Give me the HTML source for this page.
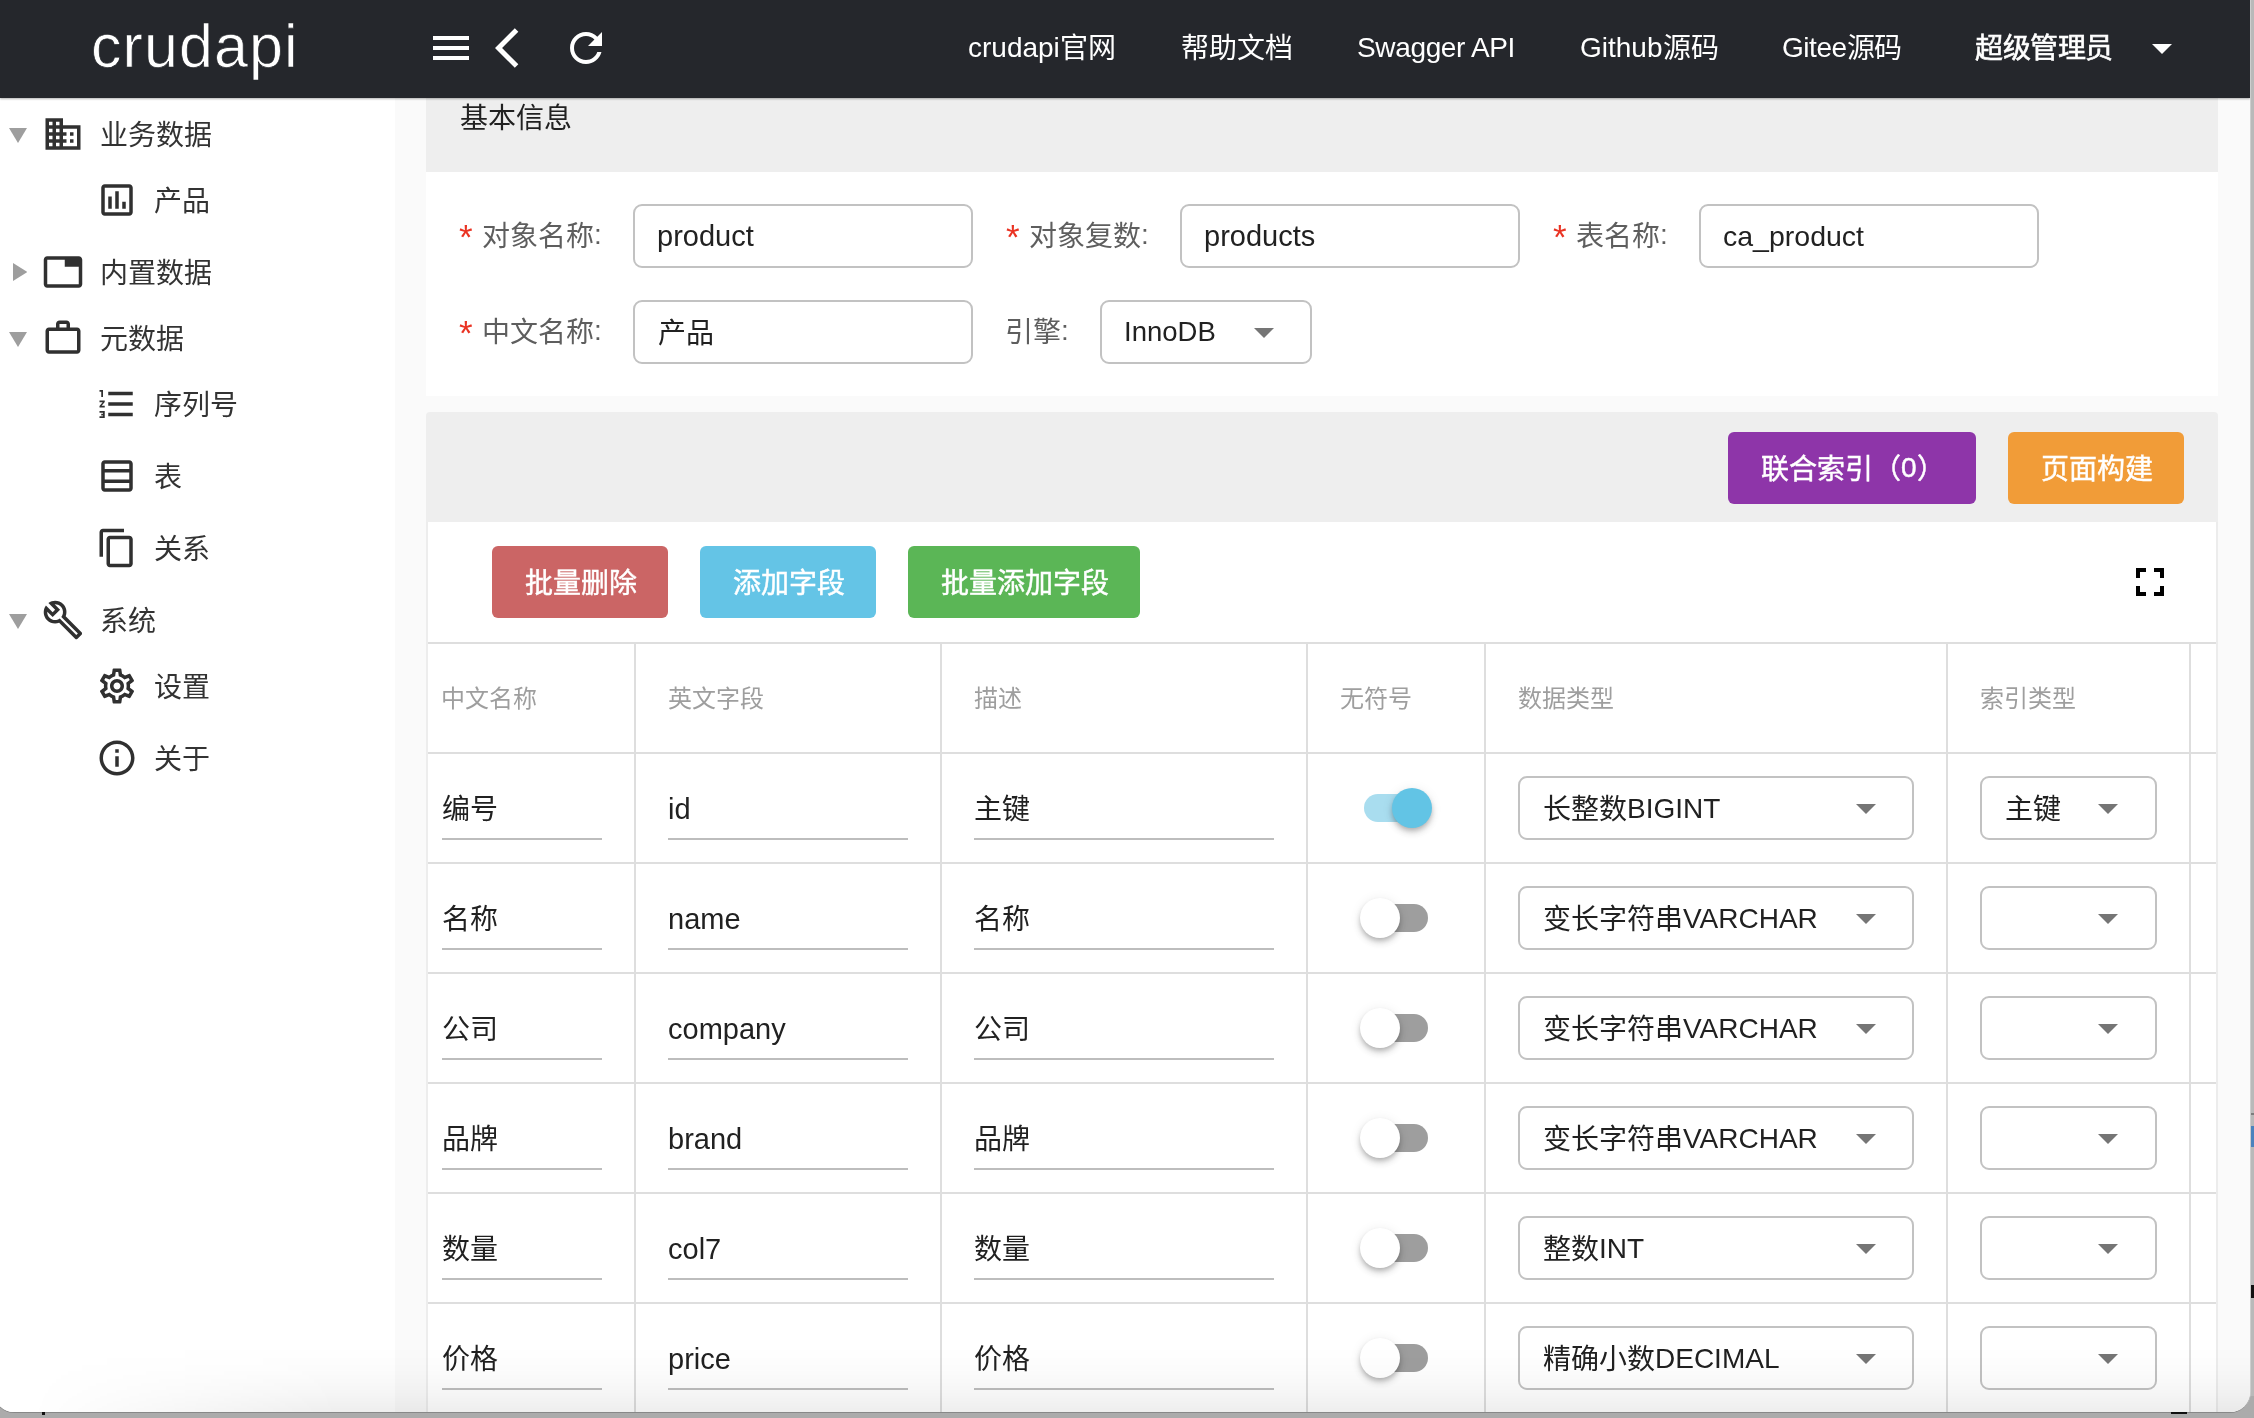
<!DOCTYPE html>
<html lang="zh-CN"><head><meta charset="utf-8"><title>crudapi</title>
<style>
html,body{margin:0;padding:0;}
body{width:2254px;height:1418px;overflow:hidden;background:#ababab;font-family:"Liberation Sans",sans-serif;}
#win{position:absolute;left:-6px;top:0;width:2256px;height:1412px;overflow:hidden;background:#fff;border-radius:0 0 20px 20px;box-shadow:1px 0 0 rgba(255,255,255,.3),0 1px 0 rgba(0,0,0,.2);}
#in{position:absolute;left:6px;top:0;width:2250px;height:1412px;}
.a{position:absolute;display:block;}
.t{white-space:nowrap;will-change:transform;}
.c{position:relative;top:2px;}
.c1{position:relative;top:1px;}
.c0{position:relative;top:0;}
</style></head><body>
<div class="a" style="left:2246px;top:0;width:8px;height:1396px;background:#b9b9b9"></div>
<div class="a" style="left:2251px;top:1126px;width:3px;height:21px;background:#4a82bd"></div>
<div class="a" style="left:2251px;top:1285px;width:3px;height:13px;background:#111"></div>
<div class="a" style="left:2251px;top:1113px;width:3px;height:2px;background:#7d7d7d"></div>
<div class="a" style="left:42px;top:1412px;width:3px;height:3px;background:#111"></div>
<div class="a" style="left:2171px;top:1412px;width:16px;height:2px;background:#111"></div>
<div id="win"><div id="in">
<div class="a" style="left:0px;top:0px;width:395px;height:1412px;background:#fff;"></div>
<div class="a" style="left:395px;top:0px;width:1855px;height:1412px;background:#fafafa;"></div>
<div class="a" style="left:426px;top:97px;width:1792px;height:75px;background:#eeeeee;"></div>
<div class="a" style="left:426px;top:172px;width:1792px;height:224px;background:#fff;"></div>
<div class="a t" style="left:460px;top:97px;height:40px;line-height:40px;font-size:28px;color:#212121;"><span class="c">基本信息</span></div>
<div class="a t" style="left:459px;top:217px;height:40px;line-height:40px;font-size:35px;color:#ea3323;">*</div>
<div class="a t" style="left:482px;top:215px;height:40px;line-height:40px;font-size:28px;color:#5e5e5e;"><span class="c">对象名称</span>:</div>
<div class="a" style="left:633px;top:204px;width:340px;height:64px;box-sizing:border-box;border:2px solid #c2c2c2;border-radius:9px;background:#fff;"></div>
<div class="a t" style="left:657px;top:216px;height:40px;line-height:40px;font-size:29px;color:#212121;">product</div>
<div class="a t" style="left:1006px;top:217px;height:40px;line-height:40px;font-size:35px;color:#ea3323;">*</div>
<div class="a t" style="left:1029px;top:215px;height:40px;line-height:40px;font-size:28px;color:#5e5e5e;"><span class="c">对象复数</span>:</div>
<div class="a" style="left:1180px;top:204px;width:340px;height:64px;box-sizing:border-box;border:2px solid #c2c2c2;border-radius:9px;background:#fff;"></div>
<div class="a t" style="left:1204px;top:216px;height:40px;line-height:40px;font-size:29px;color:#212121;">products</div>
<div class="a t" style="left:1553px;top:217px;height:40px;line-height:40px;font-size:35px;color:#ea3323;">*</div>
<div class="a t" style="left:1576px;top:215px;height:40px;line-height:40px;font-size:28px;color:#5e5e5e;"><span class="c">表名称</span>:</div>
<div class="a" style="left:1699px;top:204px;width:340px;height:64px;box-sizing:border-box;border:2px solid #c2c2c2;border-radius:9px;background:#fff;"></div>
<div class="a t" style="left:1723px;top:216px;height:40px;line-height:40px;font-size:28.5px;color:#212121;">ca_product</div>
<div class="a t" style="left:459px;top:313px;height:40px;line-height:40px;font-size:35px;color:#ea3323;">*</div>
<div class="a t" style="left:482px;top:311px;height:40px;line-height:40px;font-size:28px;color:#5e5e5e;"><span class="c">中文名称</span>:</div>
<div class="a" style="left:633px;top:300px;width:340px;height:64px;box-sizing:border-box;border:2px solid #c2c2c2;border-radius:9px;background:#fff;"></div>
<div class="a t" style="left:658px;top:312px;height:40px;line-height:40px;font-size:28px;color:#212121;"><span class="c">产品</span></div>
<div class="a t" style="left:1005px;top:311px;height:40px;line-height:40px;font-size:28px;color:#5e5e5e;"><span class="c">引擎</span>:</div>
<div class="a" style="left:1100px;top:300px;width:212px;height:64px;box-sizing:border-box;border:2px solid #c2c2c2;border-radius:9px;background:#fff;"></div>
<div class="a t" style="left:1124px;top:312px;height:40px;line-height:40px;font-size:27.5px;color:#212121;">InnoDB</div>
<svg class="a" style="left:1240px;top:308px" width="48" height="48" viewBox="0 0 24 24"><path fill="#757575" d="M7 10l5 5 5-5z"/></svg>
<div class="a" style="left:426px;top:412px;width:1792px;height:110px;background:#eeeeee;border-radius:4px 4px 0 0;"></div>
<div class="a" style="left:426px;top:522px;width:1792px;height:890px;background:#fff;"></div>
<div class="a" style="left:1728px;top:432px;width:248px;height:72px;background:#8e35a9;border-radius:6px;"></div>
<div class="a t" style="left:1761px;top:448px;height:40px;line-height:40px;font-size:28px;color:#fff;-webkit-text-stroke:0.45px #fff;"><span class="c">联合索引（</span>0<span class="c">）</span></div>
<div class="a" style="left:2008px;top:432px;width:176px;height:72px;background:#f19c38;border-radius:6px;"></div>
<div class="a t" style="left:2041px;top:448px;height:40px;line-height:40px;font-size:28px;color:#fff;-webkit-text-stroke:0.45px #fff;"><span class="c">页面构建</span></div>
<div class="a" style="left:492px;top:546px;width:176px;height:72px;background:#cb6565;border-radius:6px;"></div>
<div class="a t" style="left:525px;top:562px;height:40px;line-height:40px;font-size:28px;color:#fff;-webkit-text-stroke:0.45px #fff;"><span class="c">批量删除</span></div>
<div class="a" style="left:700px;top:546px;width:176px;height:72px;background:#64c4e6;border-radius:6px;"></div>
<div class="a t" style="left:733px;top:562px;height:40px;line-height:40px;font-size:28px;color:#fff;-webkit-text-stroke:0.45px #fff;"><span class="c">添加字段</span></div>
<div class="a" style="left:908px;top:546px;width:232px;height:72px;background:#5bb656;border-radius:6px;"></div>
<div class="a t" style="left:941px;top:562px;height:40px;line-height:40px;font-size:28px;color:#fff;-webkit-text-stroke:0.45px #fff;"><span class="c">批量添加字段</span></div>
<svg class="a" style="left:2126px;top:558px" width="48" height="48" viewBox="0 0 24 24"><path fill="#000" d="M7 14H5v5h5v-2H7v-3zm-2-4h2V7h3V5H5v5zm12 7h-3v2h5v-5h-2v3zM14 5v2h3v3h2V5h-5z"/></svg>
<div class="a" style="left:426px;top:522px;width:2px;height:890px;background:#ededed;"></div>
<div class="a" style="left:2216px;top:522px;width:2px;height:890px;background:#ececec;"></div>
<div class="a" style="left:634px;top:643px;width:2px;height:769px;background:#dedede;"></div>
<div class="a" style="left:940px;top:643px;width:2px;height:769px;background:#dedede;"></div>
<div class="a" style="left:1306px;top:643px;width:2px;height:769px;background:#dedede;"></div>
<div class="a" style="left:1484px;top:643px;width:2px;height:769px;background:#dedede;"></div>
<div class="a" style="left:1946px;top:643px;width:2px;height:769px;background:#dedede;"></div>
<div class="a" style="left:2189px;top:643px;width:2px;height:769px;background:#dedede;"></div>
<div class="a" style="left:428px;top:642px;width:1788px;height:2px;background:#dedede;"></div>
<div class="a" style="left:428px;top:752px;width:1788px;height:2px;background:#dedede;"></div>
<div class="a" style="left:428px;top:862px;width:1788px;height:2px;background:#dedede;"></div>
<div class="a" style="left:428px;top:972px;width:1788px;height:2px;background:#dedede;"></div>
<div class="a" style="left:428px;top:1082px;width:1788px;height:2px;background:#dedede;"></div>
<div class="a" style="left:428px;top:1192px;width:1788px;height:2px;background:#dedede;"></div>
<div class="a" style="left:428px;top:1302px;width:1788px;height:2px;background:#dedede;"></div>
<div class="a t" style="left:441px;top:678px;height:40px;line-height:40px;font-size:24px;color:#9e9e9e;"><span class="c1">中文名称</span></div>
<div class="a t" style="left:668px;top:678px;height:40px;line-height:40px;font-size:24px;color:#9e9e9e;"><span class="c1">英文字段</span></div>
<div class="a t" style="left:974px;top:678px;height:40px;line-height:40px;font-size:24px;color:#9e9e9e;"><span class="c1">描述</span></div>
<div class="a t" style="left:1340px;top:678px;height:40px;line-height:40px;font-size:24px;color:#9e9e9e;"><span class="c1">无符号</span></div>
<div class="a t" style="left:1518px;top:678px;height:40px;line-height:40px;font-size:24px;color:#9e9e9e;"><span class="c1">数据类型</span></div>
<div class="a t" style="left:1980px;top:678px;height:40px;line-height:40px;font-size:24px;color:#9e9e9e;"><span class="c1">索引类型</span></div>
<div class="a t" style="left:442px;top:788px;height:40px;line-height:40px;font-size:28px;color:#212121;"><span class="c">编号</span></div>
<div class="a" style="left:442px;top:838px;width:160px;height:2px;background:#bdbdbd;"></div>
<div class="a t" style="left:668px;top:789px;height:40px;line-height:40px;font-size:29px;color:#212121;">id</div>
<div class="a" style="left:668px;top:838px;width:240px;height:2px;background:#bdbdbd;"></div>
<div class="a t" style="left:974px;top:788px;height:40px;line-height:40px;font-size:28px;color:#212121;"><span class="c">主键</span></div>
<div class="a" style="left:974px;top:838px;width:300px;height:2px;background:#bdbdbd;"></div>
<div class="a" style="left:1364px;top:794px;width:64px;height:28px;background:#a9ddef;border-radius:14px;"></div>
<div class="a" style="left:1392px;top:788px;width:40px;height:40px;background:#62c4e5;border-radius:50%;box-shadow:0 3px 5px -1px rgba(0,0,0,.2),0 5px 7px 0 rgba(0,0,0,.12),0 1px 12px 0 rgba(0,0,0,.08);"></div>
<div class="a" style="left:1518px;top:776px;width:396px;height:64px;box-sizing:border-box;border:2px solid #c2c2c2;border-radius:9px;background:#fff;"></div>
<div class="a t" style="left:1543px;top:789px;height:40px;line-height:40px;font-size:28px;color:#212121;"><span class="c1">长整数</span>BIGINT</div>
<svg class="a" style="left:1842px;top:784px" width="48" height="48" viewBox="0 0 24 24"><path fill="#757575" d="M7 10l5 5 5-5z"/></svg>
<div class="a" style="left:1980px;top:776px;width:177px;height:64px;box-sizing:border-box;border:2px solid #c2c2c2;border-radius:9px;background:#fff;"></div>
<div class="a t" style="left:2005px;top:788px;height:40px;line-height:40px;font-size:28px;color:#212121;"><span class="c">主键</span></div>
<svg class="a" style="left:2084px;top:784px" width="48" height="48" viewBox="0 0 24 24"><path fill="#757575" d="M7 10l5 5 5-5z"/></svg>
<div class="a t" style="left:442px;top:898px;height:40px;line-height:40px;font-size:28px;color:#212121;"><span class="c">名称</span></div>
<div class="a" style="left:442px;top:948px;width:160px;height:2px;background:#bdbdbd;"></div>
<div class="a t" style="left:668px;top:899px;height:40px;line-height:40px;font-size:29px;color:#212121;">name</div>
<div class="a" style="left:668px;top:948px;width:240px;height:2px;background:#bdbdbd;"></div>
<div class="a t" style="left:974px;top:898px;height:40px;line-height:40px;font-size:28px;color:#212121;"><span class="c">名称</span></div>
<div class="a" style="left:974px;top:948px;width:300px;height:2px;background:#bdbdbd;"></div>
<div class="a" style="left:1364px;top:904px;width:64px;height:28px;background:#9e9e9e;border-radius:14px;"></div>
<div class="a" style="left:1360px;top:898px;width:40px;height:40px;background:#fff;border-radius:50%;box-shadow:0 3px 5px -1px rgba(0,0,0,.2),0 5px 7px 0 rgba(0,0,0,.12),0 1px 12px 0 rgba(0,0,0,.08);"></div>
<div class="a" style="left:1518px;top:886px;width:396px;height:64px;box-sizing:border-box;border:2px solid #c2c2c2;border-radius:9px;background:#fff;"></div>
<div class="a t" style="left:1543px;top:899px;height:40px;line-height:40px;font-size:28px;color:#212121;"><span class="c1">变长字符串</span>VARCHAR</div>
<svg class="a" style="left:1842px;top:894px" width="48" height="48" viewBox="0 0 24 24"><path fill="#757575" d="M7 10l5 5 5-5z"/></svg>
<div class="a" style="left:1980px;top:886px;width:177px;height:64px;box-sizing:border-box;border:2px solid #c2c2c2;border-radius:9px;background:#fff;"></div>
<svg class="a" style="left:2084px;top:894px" width="48" height="48" viewBox="0 0 24 24"><path fill="#757575" d="M7 10l5 5 5-5z"/></svg>
<div class="a t" style="left:442px;top:1008px;height:40px;line-height:40px;font-size:28px;color:#212121;"><span class="c">公司</span></div>
<div class="a" style="left:442px;top:1058px;width:160px;height:2px;background:#bdbdbd;"></div>
<div class="a t" style="left:668px;top:1009px;height:40px;line-height:40px;font-size:29px;color:#212121;">company</div>
<div class="a" style="left:668px;top:1058px;width:240px;height:2px;background:#bdbdbd;"></div>
<div class="a t" style="left:974px;top:1008px;height:40px;line-height:40px;font-size:28px;color:#212121;"><span class="c">公司</span></div>
<div class="a" style="left:974px;top:1058px;width:300px;height:2px;background:#bdbdbd;"></div>
<div class="a" style="left:1364px;top:1014px;width:64px;height:28px;background:#9e9e9e;border-radius:14px;"></div>
<div class="a" style="left:1360px;top:1008px;width:40px;height:40px;background:#fff;border-radius:50%;box-shadow:0 3px 5px -1px rgba(0,0,0,.2),0 5px 7px 0 rgba(0,0,0,.12),0 1px 12px 0 rgba(0,0,0,.08);"></div>
<div class="a" style="left:1518px;top:996px;width:396px;height:64px;box-sizing:border-box;border:2px solid #c2c2c2;border-radius:9px;background:#fff;"></div>
<div class="a t" style="left:1543px;top:1009px;height:40px;line-height:40px;font-size:28px;color:#212121;"><span class="c1">变长字符串</span>VARCHAR</div>
<svg class="a" style="left:1842px;top:1004px" width="48" height="48" viewBox="0 0 24 24"><path fill="#757575" d="M7 10l5 5 5-5z"/></svg>
<div class="a" style="left:1980px;top:996px;width:177px;height:64px;box-sizing:border-box;border:2px solid #c2c2c2;border-radius:9px;background:#fff;"></div>
<svg class="a" style="left:2084px;top:1004px" width="48" height="48" viewBox="0 0 24 24"><path fill="#757575" d="M7 10l5 5 5-5z"/></svg>
<div class="a t" style="left:442px;top:1118px;height:40px;line-height:40px;font-size:28px;color:#212121;"><span class="c">品牌</span></div>
<div class="a" style="left:442px;top:1168px;width:160px;height:2px;background:#bdbdbd;"></div>
<div class="a t" style="left:668px;top:1119px;height:40px;line-height:40px;font-size:29px;color:#212121;">brand</div>
<div class="a" style="left:668px;top:1168px;width:240px;height:2px;background:#bdbdbd;"></div>
<div class="a t" style="left:974px;top:1118px;height:40px;line-height:40px;font-size:28px;color:#212121;"><span class="c">品牌</span></div>
<div class="a" style="left:974px;top:1168px;width:300px;height:2px;background:#bdbdbd;"></div>
<div class="a" style="left:1364px;top:1124px;width:64px;height:28px;background:#9e9e9e;border-radius:14px;"></div>
<div class="a" style="left:1360px;top:1118px;width:40px;height:40px;background:#fff;border-radius:50%;box-shadow:0 3px 5px -1px rgba(0,0,0,.2),0 5px 7px 0 rgba(0,0,0,.12),0 1px 12px 0 rgba(0,0,0,.08);"></div>
<div class="a" style="left:1518px;top:1106px;width:396px;height:64px;box-sizing:border-box;border:2px solid #c2c2c2;border-radius:9px;background:#fff;"></div>
<div class="a t" style="left:1543px;top:1119px;height:40px;line-height:40px;font-size:28px;color:#212121;"><span class="c1">变长字符串</span>VARCHAR</div>
<svg class="a" style="left:1842px;top:1114px" width="48" height="48" viewBox="0 0 24 24"><path fill="#757575" d="M7 10l5 5 5-5z"/></svg>
<div class="a" style="left:1980px;top:1106px;width:177px;height:64px;box-sizing:border-box;border:2px solid #c2c2c2;border-radius:9px;background:#fff;"></div>
<svg class="a" style="left:2084px;top:1114px" width="48" height="48" viewBox="0 0 24 24"><path fill="#757575" d="M7 10l5 5 5-5z"/></svg>
<div class="a t" style="left:442px;top:1228px;height:40px;line-height:40px;font-size:28px;color:#212121;"><span class="c">数量</span></div>
<div class="a" style="left:442px;top:1278px;width:160px;height:2px;background:#bdbdbd;"></div>
<div class="a t" style="left:668px;top:1229px;height:40px;line-height:40px;font-size:29px;color:#212121;">col7</div>
<div class="a" style="left:668px;top:1278px;width:240px;height:2px;background:#bdbdbd;"></div>
<div class="a t" style="left:974px;top:1228px;height:40px;line-height:40px;font-size:28px;color:#212121;"><span class="c">数量</span></div>
<div class="a" style="left:974px;top:1278px;width:300px;height:2px;background:#bdbdbd;"></div>
<div class="a" style="left:1364px;top:1234px;width:64px;height:28px;background:#9e9e9e;border-radius:14px;"></div>
<div class="a" style="left:1360px;top:1228px;width:40px;height:40px;background:#fff;border-radius:50%;box-shadow:0 3px 5px -1px rgba(0,0,0,.2),0 5px 7px 0 rgba(0,0,0,.12),0 1px 12px 0 rgba(0,0,0,.08);"></div>
<div class="a" style="left:1518px;top:1216px;width:396px;height:64px;box-sizing:border-box;border:2px solid #c2c2c2;border-radius:9px;background:#fff;"></div>
<div class="a t" style="left:1543px;top:1229px;height:40px;line-height:40px;font-size:28px;color:#212121;"><span class="c1">整数</span>INT</div>
<svg class="a" style="left:1842px;top:1224px" width="48" height="48" viewBox="0 0 24 24"><path fill="#757575" d="M7 10l5 5 5-5z"/></svg>
<div class="a" style="left:1980px;top:1216px;width:177px;height:64px;box-sizing:border-box;border:2px solid #c2c2c2;border-radius:9px;background:#fff;"></div>
<svg class="a" style="left:2084px;top:1224px" width="48" height="48" viewBox="0 0 24 24"><path fill="#757575" d="M7 10l5 5 5-5z"/></svg>
<div class="a t" style="left:442px;top:1338px;height:40px;line-height:40px;font-size:28px;color:#212121;"><span class="c">价格</span></div>
<div class="a" style="left:442px;top:1388px;width:160px;height:2px;background:#bdbdbd;"></div>
<div class="a t" style="left:668px;top:1339px;height:40px;line-height:40px;font-size:29px;color:#212121;">price</div>
<div class="a" style="left:668px;top:1388px;width:240px;height:2px;background:#bdbdbd;"></div>
<div class="a t" style="left:974px;top:1338px;height:40px;line-height:40px;font-size:28px;color:#212121;"><span class="c">价格</span></div>
<div class="a" style="left:974px;top:1388px;width:300px;height:2px;background:#bdbdbd;"></div>
<div class="a" style="left:1364px;top:1344px;width:64px;height:28px;background:#9e9e9e;border-radius:14px;"></div>
<div class="a" style="left:1360px;top:1338px;width:40px;height:40px;background:#fff;border-radius:50%;box-shadow:0 3px 5px -1px rgba(0,0,0,.2),0 5px 7px 0 rgba(0,0,0,.12),0 1px 12px 0 rgba(0,0,0,.08);"></div>
<div class="a" style="left:1518px;top:1326px;width:396px;height:64px;box-sizing:border-box;border:2px solid #c2c2c2;border-radius:9px;background:#fff;"></div>
<div class="a t" style="left:1543px;top:1339px;height:40px;line-height:40px;font-size:28px;color:#212121;"><span class="c1">精确小数</span>DECIMAL</div>
<svg class="a" style="left:1842px;top:1334px" width="48" height="48" viewBox="0 0 24 24"><path fill="#757575" d="M7 10l5 5 5-5z"/></svg>
<div class="a" style="left:1980px;top:1326px;width:177px;height:64px;box-sizing:border-box;border:2px solid #c2c2c2;border-radius:9px;background:#fff;"></div>
<svg class="a" style="left:2084px;top:1334px" width="48" height="48" viewBox="0 0 24 24"><path fill="#757575" d="M7 10l5 5 5-5z"/></svg>
<div class="a" style="left:0px;top:1346px;width:2250px;height:66px;background:linear-gradient(to bottom, rgba(0,0,0,0) 0%, rgba(0,0,0,0.012) 35%, rgba(0,0,0,0.035) 70%, rgba(0,0,0,0.066) 100%);-webkit-mask-image:linear-gradient(to right, transparent 30px, #000 340px);mask-image:linear-gradient(to right, transparent 30px, #000 340px);"></div>
<svg class="a" style="left:9px;top:128px" width="18" height="15" viewBox="0 0 18 15"><polygon fill="#9e9e9e" points="0,0 18,0 9,15"/></svg>
<svg class="a" style="left:42px;top:113px" width="42" height="42" viewBox="0 0 24 24"><path fill="#303030" d="M12 7V3H2v18h20V7H12zM6 19H4v-2h2v2zm0-4H4v-2h2v2zm0-4H4V9h2v2zm0-4H4V5h2v2zm4 12H8v-2h2v2zm0-4H8v-2h2v2zm0-4H8V9h2v2zm0-4H8V5h2v2zm10 12h-8v-2h2v-2h-2v-2h2v-2h-2V9h8v10zm-2-8h-2v2h2v-2zm0 4h-2v2h2v-2z"/></svg>
<div class="a t" style="left:100px;top:114px;height:40px;line-height:40px;font-size:28px;color:#333;"><span class="c">业务数据</span></div>
<svg class="a" style="left:96px;top:179px" width="42" height="42" viewBox="0 0 24 24"><path fill="#303030" d="M9 17H7v-7h2v7zm4 0h-2V7h2v10zm4 0h-2v-4h2v4zm2 2H5V5h14v14zm0-16H5c-1.1 0-2 .9-2 2v14c0 1.1.9 2 2 2h14c1.1 0 2-.9 2-2V5c0-1.1-.9-2-2-2z"/></svg>
<div class="a t" style="left:154px;top:180px;height:40px;line-height:40px;font-size:28px;color:#333;"><span class="c">产品</span></div>
<svg class="a" style="left:12.7px;top:263px" width="14.3" height="18" viewBox="0 0 14.3 18"><polygon fill="#9e9e9e" points="0,0 14.3,9 0,18"/></svg>
<svg class="a" style="left:42px;top:251px" width="42" height="42" viewBox="0 0 24 24"><path fill="#303030" d="M21 3H3c-1.1 0-2 .9-2 2v14c0 1.1.9 2 2 2h18c1.1 0 2-.9 2-2V5c0-1.1-.9-2-2-2zm0 16H3V5h10v4h8v10z"/></svg>
<div class="a t" style="left:100px;top:252px;height:40px;line-height:40px;font-size:28px;color:#333;"><span class="c">内置数据</span></div>
<svg class="a" style="left:9px;top:332px" width="18" height="15" viewBox="0 0 18 15"><polygon fill="#9e9e9e" points="0,0 18,0 9,15"/></svg>
<svg class="a" style="left:42px;top:317px" width="42" height="42" viewBox="0 0 24 24"><path fill="#303030" d="M14 6V4h-4v2h4zM4 8v11h16V8H4zm16-2c1.11 0 2 .89 2 2v11c0 1.11-.89 2-2 2H4c-1.11 0-2-.89-2-2l.01-11c0-1.11.88-2 1.99-2h4V4c0-1.11.89-2 2-2h4c1.11 0 2 .89 2 2v2h4z"/></svg>
<div class="a t" style="left:100px;top:318px;height:40px;line-height:40px;font-size:28px;color:#333;"><span class="c">元数据</span></div>
<svg class="a" style="left:96px;top:383px" width="42" height="42" viewBox="0 0 24 24"><path fill="#303030" d="M2 17h2v.5H3v1h1v.5H2v1h3v-4H2v1zm1-9h1V4H2v1h1v3zm-1 3h1.8L2 13.1v.9h3v-1H3.2L5 10.9V10H2v1zm5-6v2h14V5H7zm0 14h14v-2H7v2zm0-6h14v-2H7v2z"/></svg>
<div class="a t" style="left:154px;top:384px;height:40px;line-height:40px;font-size:28px;color:#333;"><span class="c">序列号</span></div>
<svg class="a" style="left:96px;top:455px" width="42" height="42" viewBox="0 0 24 24"><path fill="#303030" d="M19,3H5C3.9,3,3,3.9,3,5v14c0,1.1,0.9,2,2,2h14c1.1,0,2-0.9,2-2V5C21,3.9,20.1,3,19,3z M19,5v3H5V5H19z M19,10v4H5v-4H19z M5,19v-3h14v3H5z"/></svg>
<div class="a t" style="left:154px;top:456px;height:40px;line-height:40px;font-size:28px;color:#333;"><span class="c">表</span></div>
<svg class="a" style="left:96px;top:527px" width="42" height="42" viewBox="0 0 24 24"><path fill="#303030" d="M16 1H4c-1.1 0-2 .9-2 2v14h2V3h12V1zm3 4H8c-1.1 0-2 .9-2 2v14c0 1.1.9 2 2 2h11c1.1 0 2-.9 2-2V7c0-1.1-.9-2-2-2zm0 16H8V7h11v14z"/></svg>
<div class="a t" style="left:154px;top:528px;height:40px;line-height:40px;font-size:28px;color:#333;"><span class="c">关系</span></div>
<svg class="a" style="left:9px;top:614px" width="18" height="15" viewBox="0 0 18 15"><polygon fill="#9e9e9e" points="0,0 18,0 9,15"/></svg>
<svg class="a" style="left:42px;top:599px" width="42" height="42" viewBox="0 0 24 24"><path fill="#303030" d="M22.61 18.99l-9.08-9.08c.93-2.34.45-5.1-1.44-7C9.79.61 6.21.4 3.66 2.26L7.5 6.11 6.08 7.52 2.25 3.69C.39 6.23.6 9.82 2.9 12.11c1.86 1.86 4.57 2.35 6.89 1.48l9.11 9.11c.39.39 1.02.39 1.41 0l2.3-2.3c.4-.38.4-1.01 0-1.41zm-3 1.6l-9.46-9.46c-.61.45-1.29.72-2 .82-1.36.2-2.79-.21-3.83-1.25C3.37 9.76 2.93 8.5 3 7.26l3.09 3.09 4.24-4.24-3.09-3.09c1.24-.07 2.49.37 3.44 1.31 1.08 1.08 1.49 2.57 1.24 3.96-.12.71-.42 1.37-.88 1.96l9.45 9.45-.88.89z"/></svg>
<div class="a t" style="left:100px;top:600px;height:40px;line-height:40px;font-size:28px;color:#333;"><span class="c">系统</span></div>
<svg class="a" style="left:96px;top:665px" width="42" height="42" viewBox="0 0 24 24"><path fill="#303030" d="M19.43 12.98c.04-.32.07-.64.07-.98 0-.34-.03-.66-.07-.98l2.11-1.65c.19-.15.24-.42.12-.64l-2-3.46c-.09-.16-.26-.25-.44-.25-.06 0-.12.01-.17.03l-2.49 1c-.52-.4-1.08-.73-1.69-.98l-.38-2.65C14.46 2.18 14.25 2 14 2h-4c-.25 0-.46.18-.49.42l-.38 2.65c-.61.25-1.17.59-1.69.98l-2.49-1c-.06-.02-.12-.03-.18-.03-.17 0-.34.09-.43.25l-2 3.46c-.13.22-.07.49.12.64l2.11 1.65c-.04.32-.07.65-.07.98 0 .33.03.66.07.98l-2.11 1.65c-.19.15-.24.42-.12.64l2 3.46c.09.16.26.25.44.25.06 0 .12-.01.17-.03l2.49-1c.52.4 1.08.73 1.69.98l.38 2.65c.03.24.24.42.49.42h4c.25 0 .46-.18.49-.42l.38-2.65c.61-.25 1.17-.59 1.69-.98l2.49 1c.06.02.12.03.18.03.17 0 .34-.09.43-.25l2-3.46c.12-.22.07-.49-.12-.64l-2.11-1.65zm-1.98-1.71c.04.31.05.52.05.73 0 .21-.02.43-.05.73l-.14 1.13.89.7 1.08.84-.7 1.21-1.27-.51-1.04-.42-.9.68c-.43.32-.84.56-1.25.73l-1.06.43-.16 1.13-.2 1.35h-1.4l-.19-1.35-.16-1.13-1.06-.43c-.43-.18-.83-.41-1.23-.71l-.91-.7-1.06.43-1.27.51-.7-1.21 1.08-.84.89-.7-.14-1.13c-.03-.31-.05-.54-.05-.74s.02-.43.05-.73l.14-1.13-.89-.7-1.08-.84.7-1.21 1.27.51 1.04.42.9-.68c.43-.32.84-.56 1.25-.73l1.06-.43.16-1.13.2-1.35h1.39l.19 1.35.16 1.13 1.06.43c.43.18.83.41 1.23.71l.91.7 1.06-.43 1.27-.51.7 1.21-1.07.85-.89.7.14 1.13zM12 8c-2.21 0-4 1.79-4 4s1.79 4 4 4 4-1.79 4-4-1.79-4-4-4zm0 6c-1.1 0-2-.9-2-2s.9-2 2-2 2 .9 2 2-.9 2-2 2z"/></svg>
<div class="a t" style="left:154px;top:666px;height:40px;line-height:40px;font-size:28px;color:#333;"><span class="c">设置</span></div>
<svg class="a" style="left:96px;top:737px" width="42" height="42" viewBox="0 0 24 24"><path fill="#303030" d="M11 7h2v2h-2zm0 4h2v6h-2zm1-9C6.48 2 2 6.48 2 12s4.48 10 10 10 10-4.48 10-10S17.52 2 12 2zm0 18c-4.41 0-8-3.59-8-8s3.59-8 8-8 8 3.59 8 8-3.59 8-8 8z"/></svg>
<div class="a t" style="left:154px;top:738px;height:40px;line-height:40px;font-size:28px;color:#333;"><span class="c">关于</span></div>
<div class="a" style="left:0px;top:0px;width:2250px;height:98px;background:#25272c;box-shadow:0 1px 2px rgba(0,0,0,.3);"></div>
<div class="a t" style="left:90.5px;top:6px;height:80px;line-height:80px;font-size:61px;color:#fff;letter-spacing:1.1px;-webkit-text-stroke:0.7px #25272c;">crudapi</div>
<svg class="a" style="left:427px;top:24px" width="48" height="48" viewBox="0 0 24 24"><path fill="#fff" d="M3 18h18v-2H3v2zm0-5h18v-2H3v2zm0-7v2h18V6H3z"/></svg>
<svg class="a" style="left:495px;top:24px" width="48" height="48" viewBox="0 0 24 24"><path fill="#fff" d="M11.67 3.87L9.9 2.1 0 12l9.9 9.9 1.77-1.77L3.54 12z"/></svg>
<svg class="a" style="left:562px;top:24px" width="48" height="48" viewBox="0 0 24 24"><path fill="#fff" d="M17.65 6.35C16.2 4.9 14.21 4 12 4c-4.42 0-7.99 3.58-7.99 8s3.57 8 7.99 8c3.73 0 6.84-2.55 7.73-6h-2.08c-.82 2.33-3.04 4-5.65 4-3.31 0-6-2.69-6-6s2.69-6 6-6c1.66 0 3.14.69 4.22 1.78L13 11h7V4l-2.35 2.35z"/></svg>
<div class="a t" style="left:968px;top:28px;height:40px;line-height:40px;font-size:28px;color:#fff;">crudapi<span class="c1">官网</span></div>
<div class="a t" style="left:1181px;top:28px;height:40px;line-height:40px;font-size:28px;color:#fff;"><span class="c1">帮助文档</span></div>
<div class="a t" style="left:1357px;top:28px;height:40px;line-height:40px;font-size:28px;color:#fff;letter-spacing:-0.35px;">Swagger API</div>
<div class="a t" style="left:1580px;top:28px;height:40px;line-height:40px;font-size:28px;color:#fff;">Github<span class="c1">源码</span></div>
<div class="a t" style="left:1782px;top:28px;height:40px;line-height:40px;font-size:28px;color:#fff;letter-spacing:-0.45px;">Gitee<span class="c1">源码</span></div>
<div class="a t" style="left:1975px;top:27px;height:40px;line-height:40px;font-size:28px;color:#fff;-webkit-text-stroke:0.6px #fff;letter-spacing:-0.45px;"><span class="c">超级管理员</span></div>
<svg class="a" style="left:2138px;top:24px" width="48" height="48" viewBox="0 0 24 24"><path fill="#fff" d="M7 10l5 5 5-5z"/></svg>
</div></div>
</body></html>
